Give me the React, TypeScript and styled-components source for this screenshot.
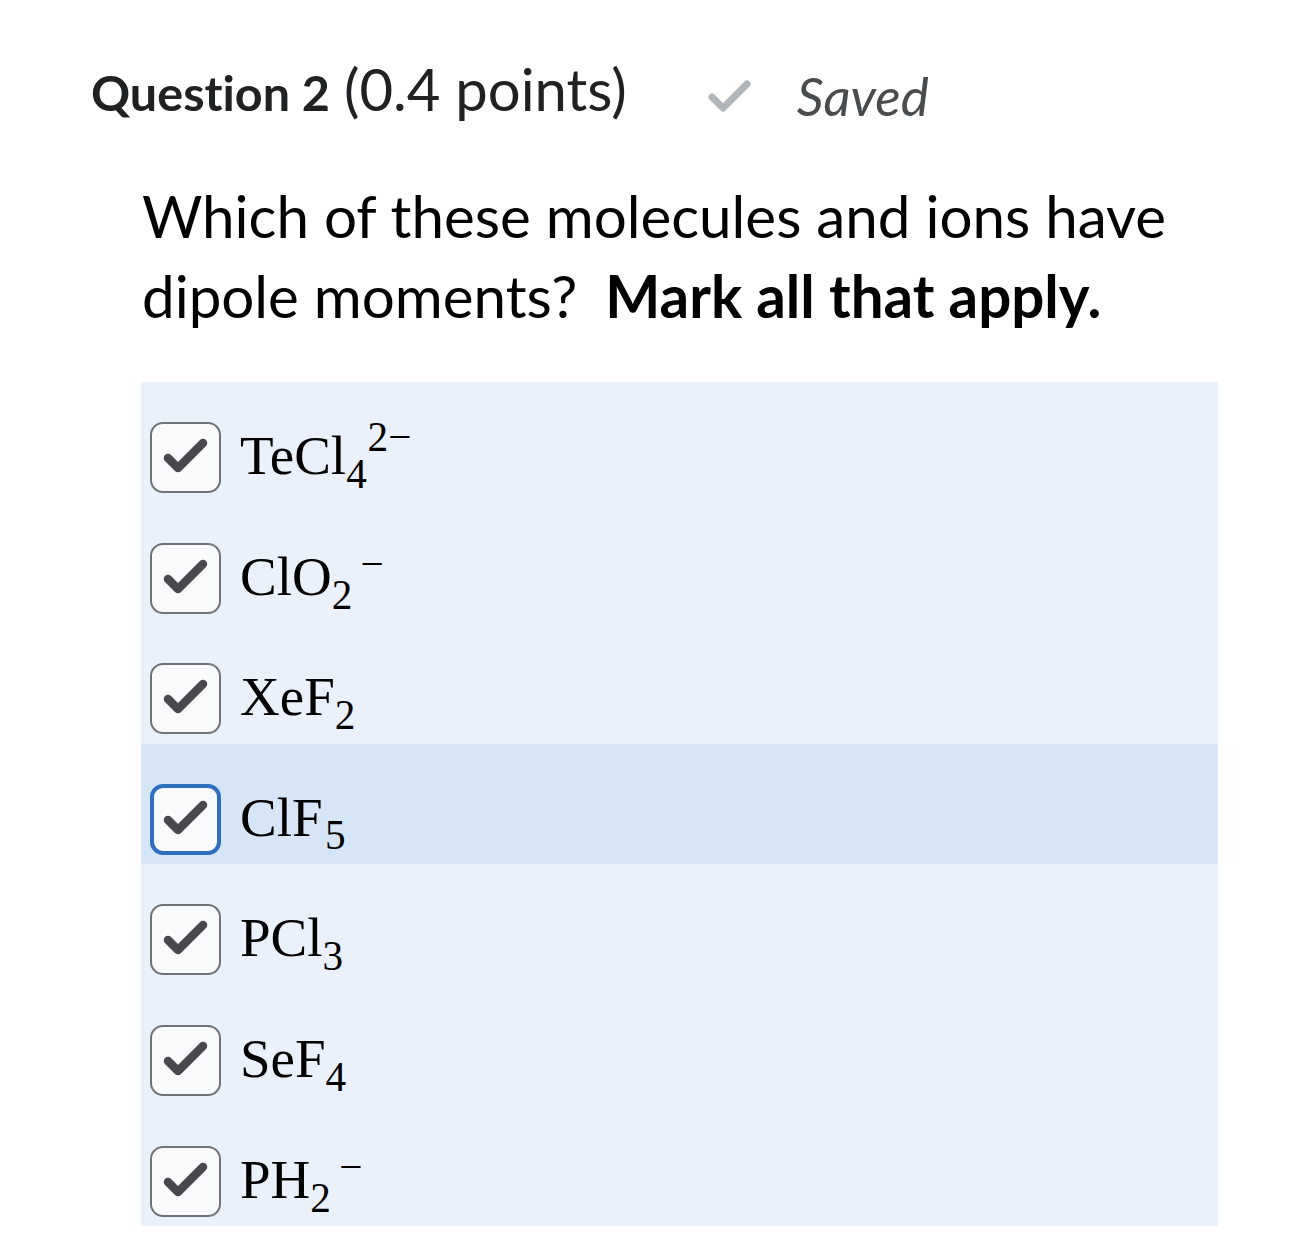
import * as React from "react";
import styled, { createGlobalStyle } from "styled-components";

const GlobalStyle = createGlobalStyle`
  html, body {
    margin: 0;
    padding: 0;
    background: #ffffff;
  }
  body {
    font-family: Lato, "Noto Sans", sans-serif;
    font-variant-ligatures: none;
    color: #202122;
  }
`;

const Page = styled.div`
  width: 1290px;
  height: 1242px;
  padding-top: 54px;
  box-sizing: border-box;
`;

const Header = styled.div`
  display: flex;
  align-items: baseline;
  padding-left: 91px;
  height: 74px;
`;

const QuestionTitle = styled.span`
  font-weight: 700;
  font-size: 48.5px;
  color: #202122;
`;

const Points = styled.span`
  font-weight: 400;
  font-size: 58px;
  color: #202122;
  margin-left: 14px;
`;

const SavedBox = styled.span`
  display: inline-flex;
  align-items: center;
  align-self: flex-start;
  margin: 10px 0 0 80px;
  font-style: italic;
  font-size: 53px;
  color: #494c4e;
  gap: 44px;
`;

const SavedTick = styled.svg`
  width: 46px;
  height: 36px;
`;

const Prompt = styled.p`
  margin: 47px 0 0 0;
  padding-left: 142px;
  padding-right: 40px;
  font-size: 58.3px;
  line-height: 80px;
  color: #000000;
`;

const Strong = styled.b`
  font-weight: 700;
  margin-left: 28px;
`;

const Options = styled.div`
  margin: 47px 0 0 141px;
  width: 1077px;
  background: #eaf1fb;
  display: flex;
  flex-direction: column;
`;

const Row = styled.label<{ $active?: boolean }>`
  display: flex;
  align-items: flex-start;
  height: 120.6px;
  box-sizing: border-box;
  padding: 40px 0 0 9px;
  background: ${(p) => (p.$active ? "#d6e6f7" : "transparent")};
`;

const Box = styled.span<{ $active?: boolean }>`
  width: 71px;
  height: 71px;
  box-sizing: border-box;
  flex: none;
  border-radius: 13px;
  border: ${(p) => (p.$active ? "4px solid #2f6fbf" : "2.5px solid #6e7377")};
  background: #f9fafc;
  display: flex;
  align-items: center;
  justify-content: center;
`;

const Formula = styled.span`
  font-family: "Liberation Serif", "Times New Roman", serif;
  font-size: 55px;
  color: #000000;
  margin-left: 19px;
  line-height: 1;
  padding-top: 6px;
`;

const Sub = styled.sub<{ $gap?: boolean }>`
  font-size: 0.75em;
  vertical-align: -0.33em;
  line-height: 0;
  margin-left: ${(p) => (p.$gap ? "0.06em" : "0")};
`;

const Sup = styled.sup<{ $gap?: boolean }>`
  font-size: 0.75em;
  vertical-align: ${(p) => (p.$gap ? "0.4em" : "0.56em")};
  line-height: 0;
  margin-left: ${(p) => (p.$gap ? "0.2em" : "0.02em")};
`;

const Check: React.FC = () => (
  <svg width="71" height="71" viewBox="0 0 71 71" style={{ margin: -4 }}>
    <path
      d="M18 36 L28 46 L53 21"
      fill="none"
      stroke="#48494d"
      strokeWidth="8.5"
      strokeLinecap="round"
      strokeLinejoin="round"
    />
  </svg>
);

type Item = { base: React.ReactNode; active?: boolean };

const items: Item[] = [
  {
    base: (
      <>
        TeCl<Sub>4</Sub>
        <Sup>2−</Sup>
      </>
    ),
  },
  {
    base: (
      <>
        ClO<Sub>2</Sub>
        <Sup $gap>−</Sup>
      </>
    ),
  },
  {
    base: (
      <>
        XeF<Sub>2</Sub>
      </>
    ),
  },
  {
    base: (
      <>
        ClF<Sub $gap>5</Sub>
      </>
    ),
    active: true,
  },
  {
    base: (
      <>
        PCl<Sub>3</Sub>
      </>
    ),
  },
  {
    base: (
      <>
        SeF<Sub>4</Sub>
      </>
    ),
  },
  {
    base: (
      <>
        PH<Sub>2</Sub>
        <Sup $gap>−</Sup>
      </>
    ),
  },
];

const App: React.FC = () => (
  <Page>
    <GlobalStyle />
    <Header>
      <QuestionTitle>Question 2</QuestionTitle>
      <Points>(0.4 points)</Points>
      <SavedBox>
        <SavedTick viewBox="0 0 46 36">
          <path
            d="M5 19 L16 30 L40 6"
            fill="none"
            stroke="#b1b5b9"
            strokeWidth="7"
            strokeLinecap="round"
            strokeLinejoin="round"
          />
        </SavedTick>
        Saved
      </SavedBox>
    </Header>
    <Prompt>
      Which of these molecules and ions have dipole moments?
      <Strong>Mark all that apply.</Strong>
    </Prompt>
    <Options>
      {items.map((it, i) => (
        <Row key={i} $active={it.active}>
          <Box $active={it.active}>
            <Check />
          </Box>
          <Formula>{it.base}</Formula>
        </Row>
      ))}
    </Options>
  </Page>
);

export default App;
